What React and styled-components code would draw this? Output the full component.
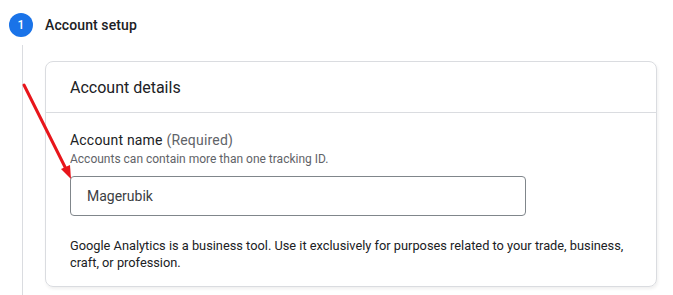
import React from 'react';
import styled, { createGlobalStyle } from 'styled-components';

const GlobalStyle = createGlobalStyle`
    body {
        margin: 0;
        background: #fff;
        font-family: Roboto, 'Liberation Sans', Arial, sans-serif;
        color: #202124;
    }
`;

const Page = styled.div`
    position: relative;
    width: 673px;
    height: 295px;
    overflow: hidden;
`;

const StepHeader = styled.div`
    display: flex;
    align-items: center;
    gap: 12px;
    padding: 13px 0 0 9px;
`;

const StepNumber = styled.div`
    width: 24px;
    height: 24px;
    border-radius: 50%;
    background: #1a73e8;
    color: #fff;
    font-size: 12px;
    font-weight: 500;
    display: flex;
    align-items: center;
    justify-content: center;
`;

const StepTitle = styled.div`
    font-size: 14px;
    font-weight: 500;
    letter-spacing: 0.1px;
`;

const StepBody = styled.div`
    display: flex;
    margin-top: 8px;
`;

const Rail = styled.div`
    width: 22px;
    margin-left: 22px;
    border-left: 1px solid #dadce0;
    min-height: 260px;
`;

const Card = styled.section`
    width: 610px;
    margin-top: 16px;
    border: 1px solid #dadce0;
    border-radius: 8px;
    box-shadow: 1px 2px 3px rgba(60, 64, 67, 0.08);
    align-self: flex-start;
`;

const CardHeader = styled.div`
    height: 50px;
    padding-left: 24px;
    display: flex;
    align-items: center;
    font-size: 16px;
    border-bottom: 1px solid #dadce0;
`;

const CardContent = styled.div`
    padding: 17px 24px 15px 24px;
`;

const Label = styled.div`
    font-size: 14px;
    line-height: 20px;
    letter-spacing: 0.2px;
`;

const Muted = styled.span`
    color: #5f6368;
`;

const Helper = styled.div`
    margin-top: 1px;
    font-size: 12px;
    line-height: 16px;
    color: #5f6368;
`;

const Input = styled.div`
    width: 422px;
    height: 38px;
    margin-top: 9px;
    padding: 0 16px;
    border: 1px solid #80868b;
    border-radius: 4px;
    display: flex;
    align-items: center;
    font-size: 14px;
    color: #3c4043;
`;

const Note = styled.p`
    margin: 21px 0 0 0;
    width: 572px;
    font-size: 12.8px;
    line-height: 17px;
`;

const Arrow = styled.svg`
    position: absolute;
    left: 0;
    top: 0;
    pointer-events: none;
`;

export default function App() {
    return (
        <Page>
            <GlobalStyle />
            <StepHeader>
                <StepNumber>1</StepNumber>
                <StepTitle>Account setup</StepTitle>
            </StepHeader>
            <StepBody>
                <Rail />
                <Card>
                    <CardHeader>Account details</CardHeader>
                    <CardContent>
                        <Label>
                            Account name <Muted>(Required)</Muted>
                        </Label>
                        <Helper>Accounts can contain more than one tracking ID.</Helper>
                        <Input>Magerubik</Input>
                        <Note>
                            Google Analytics is a business tool. Use it exclusively for purposes
                            related to your trade, business, craft, or profession.
                        </Note>
                    </CardContent>
                </Card>
            </StepBody>
            <Arrow width="673" height="295">
                <line x1="24" y1="85" x2="66" y2="169" stroke="#e8151b" strokeWidth="3" strokeLinecap="round" />
                <polygon points="71,179 61,169 70,165" fill="#e8151b" />
            </Arrow>
        </Page>
    );
}
